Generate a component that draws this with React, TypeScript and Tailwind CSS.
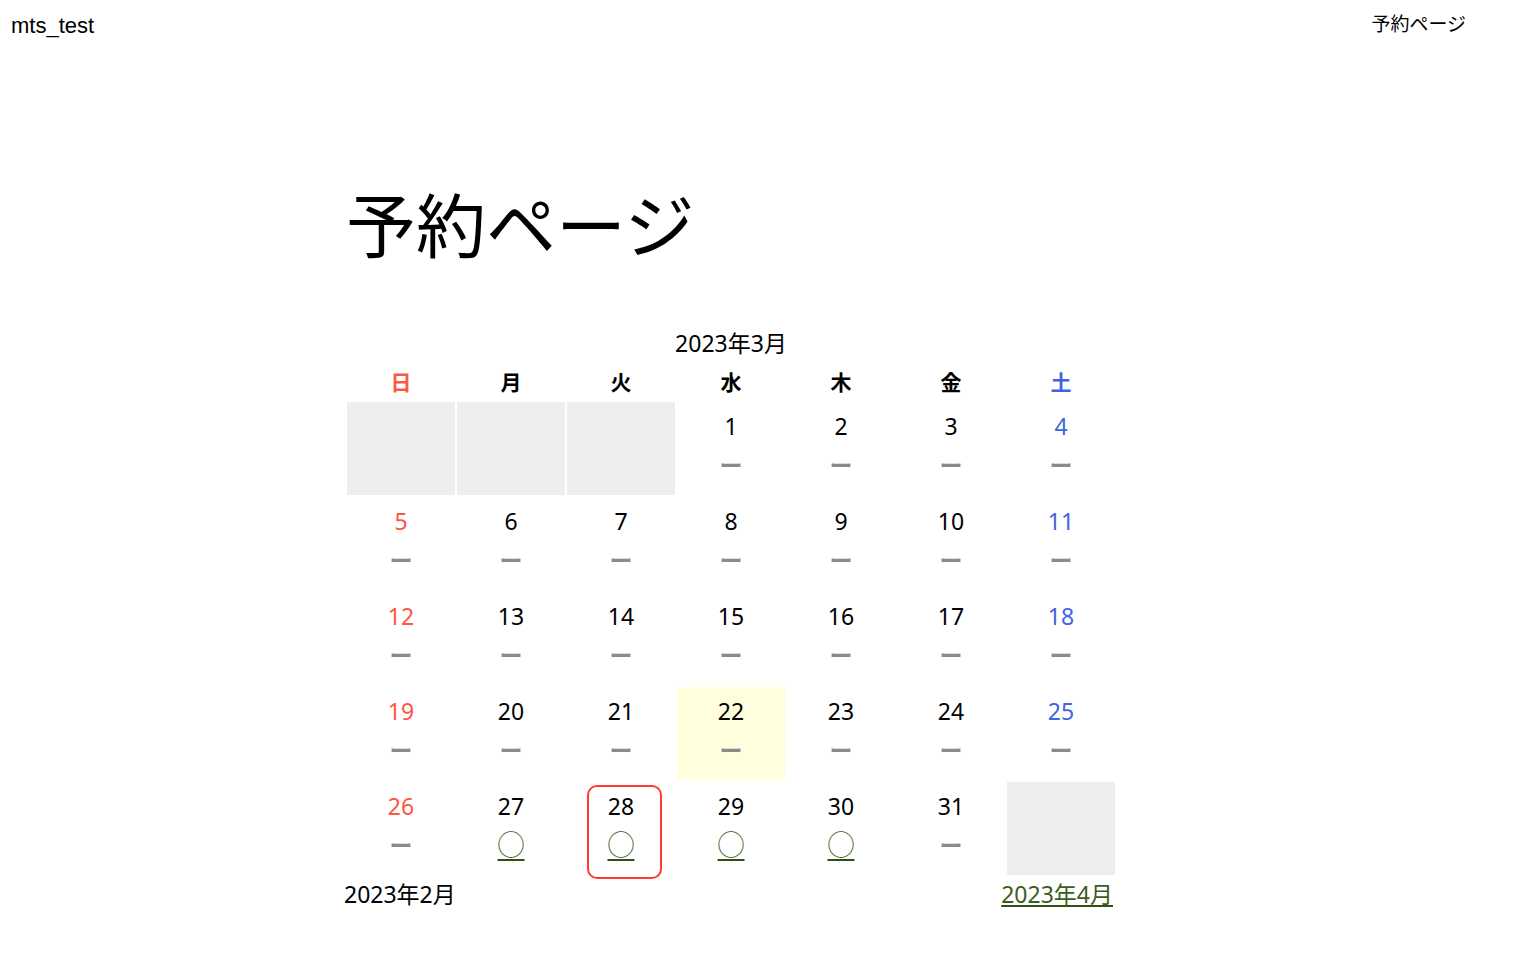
import React from "react";

type Cell = { d?: number; ok?: boolean; today?: boolean; sel?: boolean } | null;

const weeks: Cell[][] = [
  [null, null, null, { d: 1 }, { d: 2 }, { d: 3 }, { d: 4 }],
  [{ d: 5 }, { d: 6 }, { d: 7 }, { d: 8 }, { d: 9 }, { d: 10 }, { d: 11 }],
  [{ d: 12 }, { d: 13 }, { d: 14 }, { d: 15 }, { d: 16 }, { d: 17 }, { d: 18 }],
  [{ d: 19 }, { d: 20 }, { d: 21 }, { d: 22, today: true }, { d: 23 }, { d: 24 }, { d: 25 }],
  [{ d: 26 }, { d: 27, ok: true }, { d: 28, ok: true, sel: true }, { d: 29, ok: true }, { d: 30, ok: true }, { d: 31 }, null],
];

const days = ["日", "月", "火", "水", "木", "金", "土"];

const jp = { fontFamily: '"Noto Sans CJK JP", "Noto Sans", sans-serif' };
const mix = { fontFamily: '"Noto Sans", "Noto Sans CJK JP", sans-serif' };

export default function App() {
  return (
    <div className="min-h-[966px] bg-white text-black" style={jp}>
      <header className="flex h-[50px] items-center justify-between pl-[11px] pr-[70px]">
        <div className="text-[22px]" style={{ fontFamily: '"Liberation Sans", Arial, sans-serif' }}>
          mts_test
        </div>
        <div className="text-[19px] -mt-[3px]">予約ページ</div>
      </header>
      <main className="ml-[345px] w-[772px]" style={mix}>
        <h1 className="mt-[138px] ml-[1px] text-[70px] leading-[70px] font-normal" style={jp}>
          予約ページ
        </h1>
        <table className="mt-[71px] border-separate border-spacing-[2px] table-fixed w-[772px]">
          <caption className="h-[30px] text-[23px] leading-[28px] text-center">2023年3月</caption>
          <thead>
            <tr>
              {days.map((d, i) => (
                <th
                  key={d}
                  className={`h-[39px] w-[108px] pt-[1px] text-[21px] font-bold leading-[36px] ${
                    i === 0 ? "text-[#ff5544]" : i === 6 ? "text-[#4164df]" : "text-black"
                  }`}
                  style={jp}
                >
                  {d}
                </th>
              ))}
            </tr>
          </thead>
          <tbody>
            {weeks.map((w, wi) => (
              <tr key={wi}>
                {w.map((c, i) => {
                  if (!c) return <td key={i} className="h-[93px] bg-[#eeeeee]" />;
                  const color = i === 0 ? "text-[#ff5544]" : i === 6 ? "text-[#4164df]" : "text-black";
                  return (
                    <td
                      key={i}
                      className={`relative h-[93px] p-0 align-top ${c.today ? "bg-[#ffffdd]" : ""}`}
                    >
                      {c.sel && (
                        <div className="absolute left-[20px] top-[3px] h-[94px] w-[75px] rounded-[10px] border-2 border-[#ff3b30]" />
                      )}
                      <div className="flex flex-col items-center">
                        <div className={`mt-[9px] h-[30px] text-[23px] leading-[30px] ${color}`}>{c.d}</div>
                        <div className="mt-[8px] h-[30px] leading-[30px]">
                          {c.ok ? (
                            <a
                              href="#"
                              className="text-[27px] text-[#3d5c22] underline decoration-[#2f5010] decoration-2 underline-offset-[4px]"
                              style={jp}
                            >
                              ◯
                            </a>
                          ) : (
                            <span className="text-[23px] font-bold text-[#8a8a8a]" style={jp}>
                              ー
                            </span>
                          )}
                        </div>
                      </div>
                    </td>
                  );
                })}
              </tr>
            ))}
          </tbody>
        </table>
        <div className="flex h-[34px] items-center justify-between text-[23px]">
          <span className="ml-[-1px]">2023年2月</span>
          <a href="#" className="mr-[4px] text-[#3d5c22] underline decoration-[#2f5010]">
            2023年4月
          </a>
        </div>
      </main>
    </div>
  );
}
